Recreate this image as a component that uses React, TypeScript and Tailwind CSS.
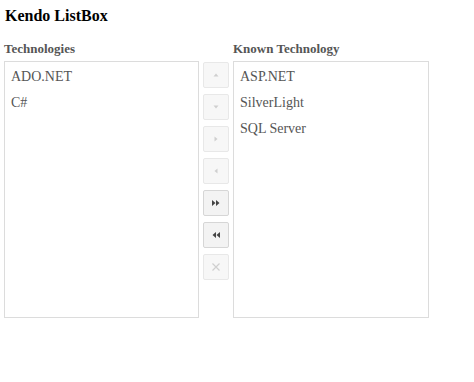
import React from "react";

const serif = { fontFamily: '"Liberation Serif", "Times New Roman", serif' };

type Icon = "up" | "down" | "right" | "left" | "allRight" | "allLeft" | "remove";

const Glyph = ({ icon }: { icon: Icon }) => {
  switch (icon) {
    case "up":
      return <svg width="8" height="8" viewBox="0 0 8 8"><path d="M1.5 5.5 L4 2.5 L6.5 5.5 Z" fill="currentColor" /></svg>;
    case "down":
      return <svg width="8" height="8" viewBox="0 0 8 8"><path d="M1.5 2.5 L4 5.5 L6.5 2.5 Z" fill="currentColor" /></svg>;
    case "right":
      return <svg width="8" height="8" viewBox="0 0 8 8"><path d="M2.5 1.5 L5.5 4 L2.5 6.5 Z" fill="currentColor" /></svg>;
    case "left":
      return <svg width="8" height="8" viewBox="0 0 8 8"><path d="M5.5 1.5 L2.5 4 L5.5 6.5 Z" fill="currentColor" /></svg>;
    case "allRight":
      return (
        <svg width="10" height="8" viewBox="0 0 10 8">
          <path d="M1 1 L4.5 4 L1 7 Z M5 1 L8.5 4 L5 7 Z" fill="currentColor" />
        </svg>
      );
    case "allLeft":
      return (
        <svg width="10" height="8" viewBox="0 0 10 8">
          <path d="M5 1 L1.5 4 L5 7 Z M9 1 L5.5 4 L9 7 Z" fill="currentColor" />
        </svg>
      );
    case "remove":
      return (
        <svg width="10" height="10" viewBox="0 0 10 10">
          <path d="M1.5 1.5 L8.5 8.5 M8.5 1.5 L1.5 8.5" stroke="currentColor" strokeWidth="1.2" />
        </svg>
      );
  }
};

const tools: { icon: Icon; enabled: boolean }[] = [
  { icon: "up", enabled: false },
  { icon: "down", enabled: false },
  { icon: "right", enabled: false },
  { icon: "left", enabled: false },
  { icon: "allRight", enabled: true },
  { icon: "allLeft", enabled: true },
  { icon: "remove", enabled: false },
];

const ListPanel = ({ label, items, width }: { label: string; items: string[]; width: string }) => (
  <div className={`flex flex-col ${width}`}>
    <div className="text-[13px] font-bold leading-[16px] text-[#555] mb-[4px] whitespace-nowrap">{label}</div>
    <ul className="h-[257px] border border-[#dcdcdc] bg-white pt-[2px]">
      {items.map((item) => (
        <li key={item} className="h-[26px] leading-[26px] px-[6px] text-[14px] text-[#555]">
          {item}
        </li>
      ))}
    </ul>
  </div>
);

export default function App() {
  return (
    <div className="w-[474px] h-[382px] bg-white pl-[4px]" style={serif}>
      <h1 className="pt-[6px] pl-[1px] text-[16px] font-bold leading-[20px] text-black">Kendo ListBox</h1>

      <div className="flex mt-[15px]">
        <ListPanel label="Technologies" items={["ADO.NET", "C#"]} width="w-[195px]" />

        {/* Toolbar */}
        <div className="flex flex-col gap-[6px] mt-[21px] mx-[4px]">
          {tools.map((t) => (
            <button
              key={t.icon}
              className={`w-[26px] h-[26px] rounded-[2px] flex items-center justify-center border ${
                t.enabled
                  ? "border-[#d6d6d6] bg-[#f3f3f3] text-[#444]"
                  : "border-[#e8e8e8] bg-[#f7f7f7] text-[#cfcfcf]"
              }`}
            >
              <Glyph icon={t.icon} />
            </button>
          ))}
        </div>

        <ListPanel label="Known Technology" items={["ASP.NET", "SilverLight", "SQL Server"]} width="w-[196px]" />
      </div>
    </div>
  );
}
